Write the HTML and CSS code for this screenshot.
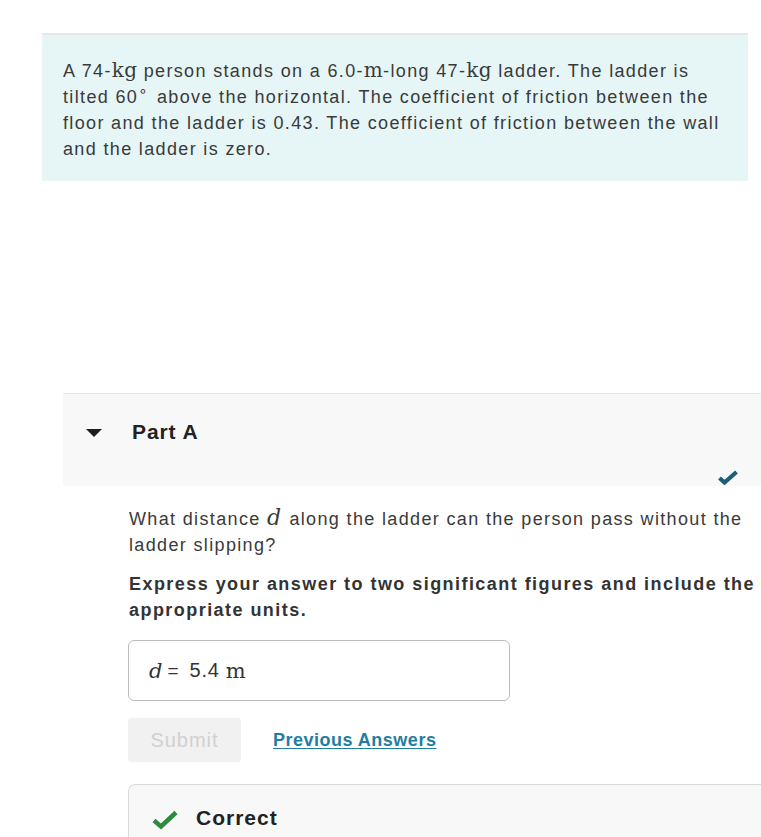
FILE: index.html
```html
<!DOCTYPE html>
<html>
<head>
<meta charset="utf-8">
<link rel="stylesheet" href="styles.css">
</head>
<body>
<div class="intro">
  <p>A 74-<span class="m">kg</span> person stands on a 6.0-<span class="m">m</span>-long 47-<span class="m">kg</span> ladder. The ladder is tilted 60<sup class="deg">∘</sup> above the horizontal. The coefficient of friction between the floor and the ladder is 0.43. The coefficient of friction between the wall and the ladder is zero.</p>
</div>

<section class="part">
  <div class="part-head">
    <span class="tri"></span>
    <h2>Part A</h2>
    <svg class="done" width="20" height="15" viewBox="0 0 20 15"><path d="M1.5 8 L6.5 12.5 L18.5 2" fill="none" stroke="#1c5e78" stroke-width="4.2" stroke-linejoin="miter"/></svg>
  </div>
  <div class="part-body">
    <p class="q">What distance <span class="mi">d</span> along the ladder can the person pass without the ladder slipping?</p>
    <p class="instr">Express your answer to two significant figures and include the appropriate units.</p>
    <div class="answer"><span class="mi">d</span><span class="eq">=</span><span class="val">5.4</span><span class="unit">m</span></div>
    <div class="actions">
      <button class="submit" disabled>Submit</button>
      <a class="prev" href="#">Previous Answers</a>
    </div>
    <div class="result">
      <svg width="26" height="20" viewBox="0 0 26 20"><path d="M2 10.5 L9 16.5 L24 2.5" fill="none" stroke="#2e8b3e" stroke-width="4.5"/></svg>
      <span>Correct</span>
    </div>
  </div>
</section>
</body>
</html>
```

FILE: styles.css
```css
html, body {
  margin: 0;
  padding: 0;
  background: #fff;
}
body {
  font-family: "Liberation Sans", Arial, sans-serif;
  color: #333;
  width: 761px;
  overflow: hidden;
}
.intro {
  margin: 33px 0 0 42px;
  width: 706px;
  box-sizing: border-box;
  background: #e6f6f7;
  border-top: 2px solid #e3e8e8;
  padding: 22px 21px 19px 21px;
}
.intro p {
  margin: 0;
  font-size: 18px;
  line-height: 26px;
  letter-spacing: 1.35px;
  color: #3a3a3a;
}
.m {
  font-family: "DejaVu Serif", "Liberation Serif", serif;
  font-size: 20px;
  letter-spacing: 0.3px;
}
.deg {
  font-family: "DejaVu Sans", sans-serif;
  font-size: 15px;
  vertical-align: 7px;
  line-height: 0;
  letter-spacing: 0;
  margin: 0 3px 0 0;
}
.part {
  margin: 212px 0 0 63px;
  border-top: 1px solid #e4e4e4;
}
.part-head {
  position: relative;
  background: #f8f8f8;
  height: 92px;
  display: flex;
  align-items: flex-start;
  padding-left: 23px;
}
.tri {
  width: 0;
  height: 0;
  border-left: 8.5px solid transparent;
  border-right: 8.5px solid transparent;
  border-top: 8px solid #1e1e1e;
  margin-top: 35px;
}
.part-head h2 {
  margin: 25px 0 0 30px;
  font-size: 21px;
  line-height: 26px;
  font-weight: bold;
  color: #222;
  letter-spacing: 0.9px;
}
.done {
  position: absolute;
  left: 655px;
  top: 76px;
}
.part-body {
  padding: 19px 0 0 66px;
}
.q, .instr {
  margin: 0;
  font-size: 18px;
  line-height: 26px;
  letter-spacing: 1.35px;
  color: #3a3a3a;
}
.q .mi {
  font-family: "DejaVu Serif", "Liberation Serif", serif;
  font-style: italic;
  font-size: 22px;
  letter-spacing: 0;
  margin-right: 2px;
}
.instr {
  margin-top: 13px;
  font-weight: bold;
  letter-spacing: 1.45px;
  color: #333;
}
.answer {
  margin-top: 17px;
  margin-left: -1px;
  width: 382px;
  height: 61px;
  box-sizing: border-box;
  border: 1px solid #bcbcbc;
  border-radius: 6px;
  display: flex;
  align-items: center;
  padding-left: 20px;
  font-size: 20px;
  color: #333;
}
.answer .mi {
  font-family: "DejaVu Serif", "Liberation Serif", serif;
  font-style: italic;
  font-size: 21px;
}
.answer .eq {
  margin: 0 11px 0 5px;
  font-size: 19px;
}
.answer .val {
  font-size: 20px;
  letter-spacing: 0.8px;
}
.answer .unit {
  font-family: "DejaVu Serif", "Liberation Serif", serif;
  font-size: 21px;
  margin-left: 6px;
  letter-spacing: 0.5px;
}
.actions {
  margin-top: 17px;
  margin-left: -1px;
  display: flex;
  align-items: center;
}
.submit {
  width: 113px;
  height: 44px;
  border: 0;
  border-radius: 3px;
  background: #f1f1f1;
  color: #d0d0d0;
  font-family: "Liberation Sans", Arial, sans-serif;
  font-size: 20px;
  letter-spacing: 1px;
  padding: 0;
}
.prev {
  margin-left: 32px;
  color: #1f7ea3;
  font-weight: bold;
  font-size: 18px;
  letter-spacing: 0.5px;
  text-decoration: underline;
  text-underline-offset: 2px;
}
.result {
  margin-top: 22px;
  margin-left: -1px;
  border: 1px solid #dadada;
  border-right: 0;
  border-radius: 7px 0 0 0;
  background: #f8f8f8;
  height: 80px;
  display: flex;
  align-items: flex-start;
  padding-left: 23px;
}
.result svg {
  margin-top: 25px;
}
.result span {
  margin: 21px 0 0 18px;
  font-size: 21px;
  font-weight: bold;
  letter-spacing: 1px;
  color: #222;
}
```
